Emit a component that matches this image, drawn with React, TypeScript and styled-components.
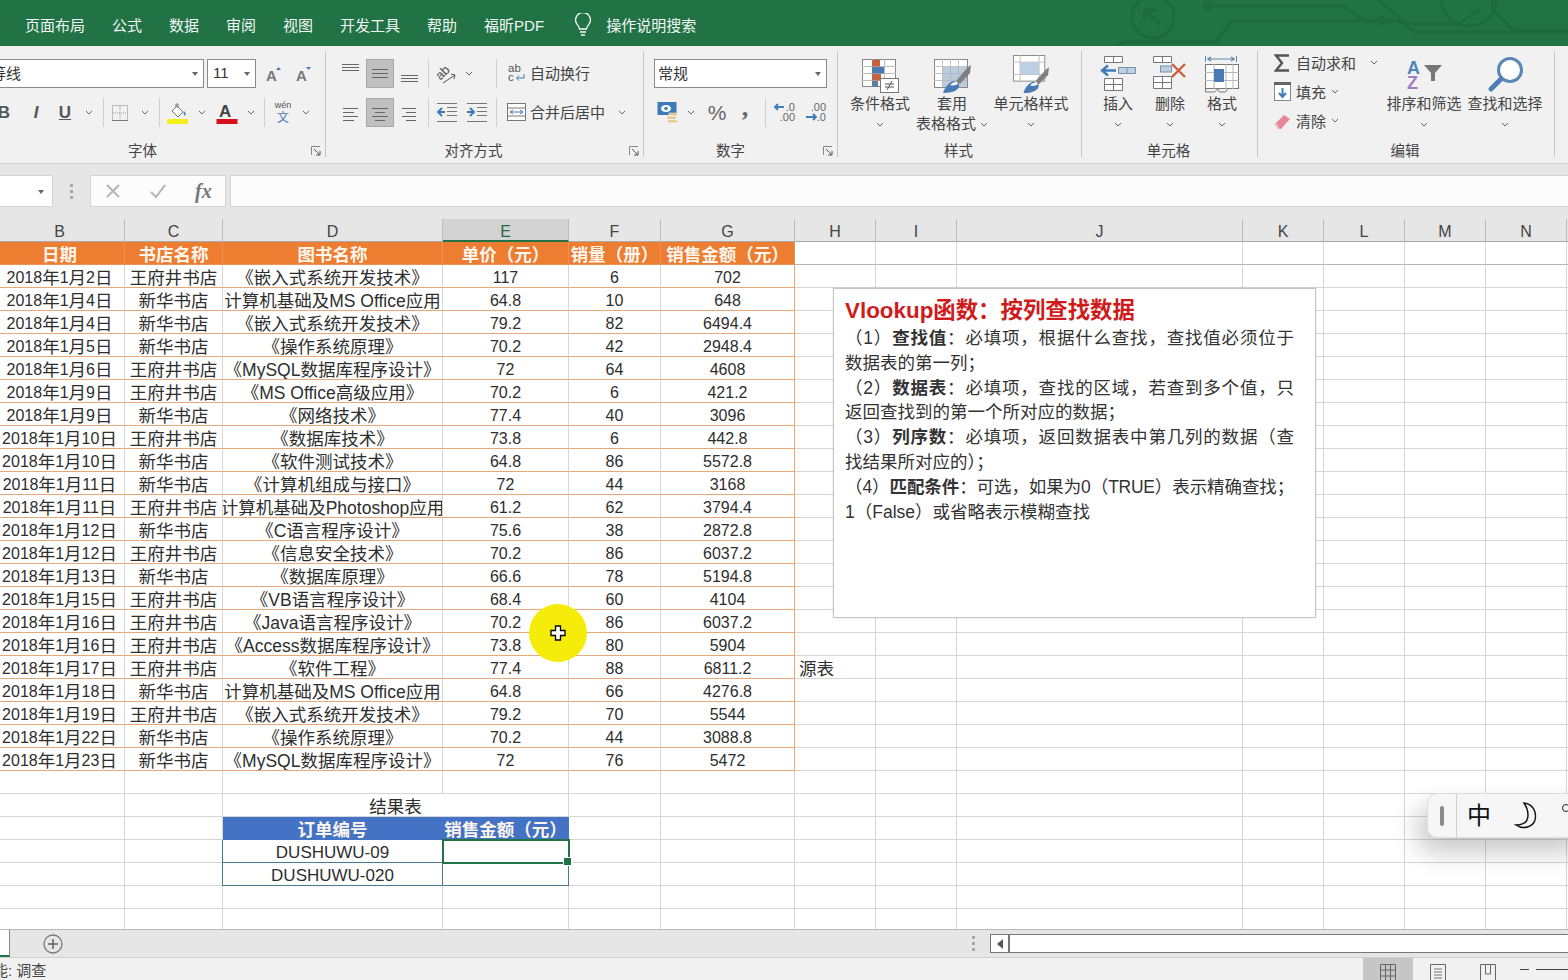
import React from 'react';
import styled, { createGlobalStyle } from 'styled-components';

const sans = '"Liberation Sans", "Noto Sans CJK SC", sans-serif';
const columns = ['B', 'C', 'D', 'E', 'F', 'G', 'H', 'I', 'J', 'K', 'L', 'M', 'N'];
const track = '125px 98px 220px 126px 92px 134px 81px 81px 286px 81px 81px 81px 81px 81px';

const tabs = ['页面布局', '公式', '数据', '审阅', '视图', '开发工具', '帮助', '福昕PDF'];

const sales = [
  ['2018年1月2日', '王府井书店', '《嵌入式系统开发技术》', '117', '6', '702'],
  ['2018年1月4日', '新华书店', '计算机基础及MS Office应用', '64.8', '10', '648'],
  ['2018年1月4日', '新华书店', '《嵌入式系统开发技术》', '79.2', '82', '6494.4'],
  ['2018年1月5日', '新华书店', '《操作系统原理》', '70.2', '42', '2948.4'],
  ['2018年1月6日', '王府井书店', '《MySQL数据库程序设计》', '72', '64', '4608'],
  ['2018年1月9日', '王府井书店', '《MS Office高级应用》', '70.2', '6', '421.2'],
  ['2018年1月9日', '新华书店', '《网络技术》', '77.4', '40', '3096'],
  ['2018年1月10日', '王府井书店', '《数据库技术》', '73.8', '6', '442.8'],
  ['2018年1月10日', '新华书店', '《软件测试技术》', '64.8', '86', '5572.8'],
  ['2018年1月11日', '新华书店', '《计算机组成与接口》', '72', '44', '3168'],
  ['2018年1月11日', '王府井书店', '计算机基础及Photoshop应用', '61.2', '62', '3794.4'],
  ['2018年1月12日', '新华书店', '《C语言程序设计》', '75.6', '38', '2872.8'],
  ['2018年1月12日', '王府井书店', '《信息安全技术》', '70.2', '86', '6037.2'],
  ['2018年1月13日', '新华书店', '《数据库原理》', '66.6', '78', '5194.8'],
  ['2018年1月15日', '王府井书店', '《VB语言程序设计》', '68.4', '60', '4104'],
  ['2018年1月16日', '王府井书店', '《Java语言程序设计》', '70.2', '86', '6037.2'],
  ['2018年1月16日', '王府井书店', '《Access数据库程序设计》', '73.8', '80', '5904'],
  ['2018年1月17日', '王府井书店', '《软件工程》', '77.4', '88', '6811.2'],
  ['2018年1月18日', '新华书店', '计算机基础及MS Office应用', '64.8', '66', '4276.8'],
  ['2018年1月19日', '王府井书店', '《嵌入式系统开发技术》', '79.2', '70', '5544'],
  ['2018年1月22日', '新华书店', '《操作系统原理》', '70.2', '44', '3088.8'],
  ['2018年1月23日', '新华书店', '《MySQL数据库程序设计》', '72', '76', '5472']
];

const GlobalStyle = createGlobalStyle`
  html, body { margin: 0; padding: 0; background: #fff; }
  * { box-sizing: border-box; }
`;

const Page = styled.div`
  position: relative;
  width: 1568px;
  height: 980px;
  overflow: hidden;
  display: flex;
  flex-direction: column;
  font-family: ${sans};
  color: #3c3c3c;
`;

const TabBar = styled.div`
  position: relative;
  flex: 0 0 46px;
  background: #217346;
  display: flex;
  align-items: center;
  gap: 27px;
  padding: 3px 0 0 25px;
  color: #f2f7f4;
  font-size: 15px;
`;

const SearchHint = styled.div`
  display: flex;
  align-items: center;
  gap: 14px;
  margin-left: 3px;
`;

const Circuit = styled.svg`
  position: absolute;
  right: 0;
  top: 0;
`;

const Ribbon = styled.div`
  flex: 0 0 117px;
  background: #f1f1f1;
  display: flex;
  padding-top: 5px;
  font-size: 15px;
  color: #444;
  overflow: hidden;
`;

const Group = styled.div<{ $w: number }>`
  position: relative;
  flex: 0 0 ${(p) => p.$w}px;
  height: 106px;
  border-right: 1px solid #c8c8c8;
  display: flex;
  flex-direction: column;
  justify-content: space-between;
`;

const GroupBody = styled.div`
  display: flex;
`;

const Rows = styled.div<{ $pl?: number }>`
  display: flex;
  flex-direction: column;
  gap: 10px;
  padding: 8px 0 0 ${(p) => p.$pl || 0}px;
`;

const ToolRow = styled.div`
  display: flex;
  align-items: center;
  height: 29px;
`;

const GroupLabel = styled.div<{ $shift?: number }>`
  height: 14px;
  line-height: 14px;
  text-align: center;
  font-size: 14.5px;
  transform: translate(${(p) => p.$shift || 0}px, 1px);
`;

const Launcher = styled.svg`
  position: absolute;
  right: 4px;
  bottom: 1px;
`;

const Field = styled.div<{ $w: number; $ml?: number; $pl?: number }>`
  flex: 0 0 ${(p) => p.$w}px;
  margin-left: ${(p) => p.$ml || 0}px;
  height: 29px;
  background: #fff;
  border: 1px solid #8a8a8a;
  padding: 0 5px 2px ${(p) => p.$pl || 4}px;
  display: flex;
  align-items: center;
  justify-content: space-between;
  font-size: 15px;
  color: #333;
`;

const Caret = styled.span`
  width: 0;
  height: 0;
  margin-top: 2px;
  border: 3px solid transparent;
  border-top: 4px solid #666;
  border-bottom: 0;
`;

const Tool = styled.div<{ $w: number; $ml?: number; $on?: boolean }>`
  flex: 0 0 ${(p) => p.$w}px;
  margin-left: ${(p) => p.$ml || 0}px;
  height: 29px;
  display: flex;
  align-items: center;
  justify-content: center;
  background: ${(p) => (p.$on ? '#c0c0c0' : 'transparent')};
  border: ${(p) => (p.$on ? '1px solid #a8a8a8' : '0')};
`;

const Letter = styled.span<{ $italic?: boolean; $under?: boolean }>`
  font-family: "Liberation Sans", sans-serif;
  font-weight: 700;
  font-size: 17px;
  font-style: ${(p) => (p.$italic ? 'italic' : 'normal')};
  text-decoration: ${(p) => (p.$under ? 'underline' : 'none')};
  color: #555;
`;

const Glyph = styled.span<{ $bold?: boolean }>`
  font-family: ${(p) => (p.$bold ? '"Liberation Serif", serif' : '"Liberation Sans", sans-serif')};
  font-weight: ${(p) => (p.$bold ? 700 : 400)};
  font-size: ${(p) => (p.$bold ? 26 : 21)}px;
  line-height: 1;
  margin-top: ${(p) => (p.$bold ? -10 : 0)}px;
  color: #666;
`;

const Divider = styled.div<{ $ml?: number }>`
  flex: 0 0 1px;
  height: 29px;
  margin-left: ${(p) => p.$ml || 0}px;
  background: #d0d0d0;
`;

const TextTool = styled.div<{ $ml?: number }>`
  display: flex;
  align-items: center;
  gap: 3px;
  padding-bottom: 2px;
  margin-left: ${(p) => p.$ml || 0}px;
  white-space: nowrap;
`;

const BigTool = styled.div<{ $w: number; $ml?: number }>`
  flex: 0 0 ${(p) => p.$w}px;
  min-width: 0;
  margin-left: ${(p) => p.$ml || 0}px;
  padding-top: 4px;
  display: flex;
  flex-direction: column;
  align-items: center;
  white-space: nowrap;
  line-height: 20px;
`;

const BigIcon = styled.div`
  height: 39px;
  display: flex;
  align-items: flex-end;
`;

const BigLine = styled.div`
  height: 20px;
  display: flex;
  align-items: center;
  gap: 4px;
`;

const EditList = styled.div`
  flex: 0 0 110px;
  margin: -3px 0 0 16px;
  display: flex;
  flex-direction: column;
`;

const EditItem = styled.div`
  height: 29px;
  display: flex;
  align-items: center;
  white-space: nowrap;
`;

const EditIcon = styled.div`
  flex: 0 0 22px;
  display: flex;
  justify-content: flex-start;
`;

const FormulaZone = styled.div`
  flex: 0 0 56px;
  background: #e6e6e6;
  border-top: 1px solid #d0d0d0;
  padding-top: 11px;
  display: flex;
  align-items: flex-start;
`;

const NameBox = styled.div`
  flex: 0 0 53px;
  height: 32px;
  background: #fff;
  border: 1px solid #d4d4d4;
  border-left: 0;
  display: flex;
  align-items: center;
  justify-content: flex-end;
  padding-right: 8px;
`;

const Grip = styled.div`
  flex: 0 0 37px;
  height: 32px;
  display: flex;
  flex-direction: column;
  align-items: center;
  justify-content: center;
  gap: 3px;

  span {
    width: 3px;
    height: 3px;
    background: #a8a8a8;
  }
`;

const FxBox = styled.div`
  flex: 0 0 136px;
  height: 32px;
  background: #fcfcfc;
  border: 1px solid #d4d4d4;
  display: flex;
  align-items: center;
  gap: 28px;
  padding-left: 14px;
`;

const FxText = styled.span`
  font-family: "Liberation Serif", serif;
  font-style: italic;
  font-weight: 700;
  font-size: 20px;
  color: #777;
`;

const FormulaInput = styled.div`
  flex: 1;
  margin-left: 4px;
  height: 32px;
  background: #fcfcfc;
  border: 1px solid #d4d4d4;
  border-right: 0;
`;

const ColumnHead = styled.div`
  flex: 0 0 23px;
  display: grid;
  grid-template-columns: ${track};
  background: #e6e6e6;
`;

const ColumnName = styled.div<{ $on?: boolean; $shift?: number }>`
  height: 23px;
  padding-right: ${(p) => p.$shift || 0}px;
  font-size: 16px;
  line-height: 25px;
  text-align: center;
  color: ${(p) => (p.$on ? '#1f6b41' : '#444')};
  background: ${(p) => (p.$on ? '#d2d2d2' : 'transparent')};
  border-right: 1px solid #bcbcbc;
  border-bottom: ${(p) => (p.$on ? '2px solid #217346' : '1px solid #a8a8a8')};
`;

const Sheet = styled.div`
  position: relative;
  flex: 0 0 687px;
  overflow: hidden;
  background: #fff;
`;

const Row = styled.div`
  display: grid;
  grid-template-columns: ${track};
  grid-auto-rows: 23px;
`;

type CellKind = 'plain' | 'title' | 'data' | 'edge' | 'result' | 'resultHead' | 'top';

const lineColor: Record<CellKind, string> = {
  plain: '#d6d6d6',
  title: '#e9935a',
  data: '#e9a877',
  edge: '#e9a877',
  result: '#4a7a8c',
  resultHead: '#4472c4',
  top: '#b4b4b4'
};

const sideColor = (kind: CellKind = 'plain') =>
  kind === 'edge' || kind === 'title' || kind === 'result' || kind === 'resultHead' ? lineColor[kind] : '#d6d6d6';

const Cell = styled.div<{ $kind?: CellKind; $span?: number; $shift?: number; $left?: boolean; $picked?: boolean }>`
  position: relative;
  grid-column: span ${(p) => p.$span || 1};
  display: flex;
  align-items: center;
  justify-content: ${(p) => (p.$left ? 'flex-start' : 'center')};
  padding: 3px ${(p) => p.$shift || 0}px 0 ${(p) => (p.$left ? 4 : 0)}px;
  overflow: ${(p) => (p.$picked ? 'visible' : 'hidden')};
  white-space: nowrap;
  font-size: 17.5px;
  line-height: 20px;
  color: ${(p) => (p.$kind === 'title' || p.$kind === 'resultHead' ? '#fdf6ef' : '#2e2e2e')};
  font-weight: ${(p) => (p.$kind === 'title' || p.$kind === 'resultHead' ? 700 : 400)};
  background: ${(p) =>
    p.$kind === 'title' ? '#ed7d31' : p.$kind === 'resultHead' ? '#4472c4' : 'transparent'};
  border-bottom: 1px solid ${(p) => lineColor[p.$kind || 'plain']};
  border-right: 1px solid ${(p) => sideColor(p.$kind)};

  ${(p) =>
    p.$picked &&
    `
    z-index: 2;
    outline: 2px solid #217346;
    outline-offset: -1px;

    &::after {
      content: '';
      position: absolute;
      right: -4px;
      bottom: -4px;
      width: 7px;
      height: 7px;
      background: #217346;
      border: 1px solid #fff;
    }
  `}
`;

const Digits = styled.span`
  font-size: 16px;
`;

const OrderCode = styled.span`
  font-size: 17px;
`;

const ResultFirst = styled(Cell)`
  border-left: 1px solid #4a7a8c;
  margin-left: -1px;
`;

const NoteBox = styled.div`
  position: absolute;
  left: 833px;
  top: 46px;
  width: 483px;
  height: 330px;
  padding: 7px 21px 0 11px;
  background: #fff;
  border: 1px solid #c4c4c4;
  box-shadow: 0 0 2px rgba(0, 0, 0, 0.12);
`;

const NoteTitle = styled.div`
  font-size: 22.4px;
  line-height: 30px;
  font-weight: 700;
  color: #cf1b1b;
`;

const NoteLine = styled.div<{ $fill?: boolean; $tight?: boolean }>`
  height: 24.8px;
  line-height: 24.8px;
  font-size: 17.5px;
  color: #333;
  white-space: nowrap;
  letter-spacing: ${(p) => (p.$tight ? '-0.3px' : '0')};
  text-align: justify;
  text-align-last: ${(p) => (p.$fill ? 'justify' : 'left')};
`;

const Pointer = styled.div`
  position: absolute;
  left: 529px;
  top: 362px;
  width: 58px;
  height: 58px;
  border-radius: 50%;
  background: #f6ec09;
  display: flex;
  align-items: center;
  justify-content: center;
`;

const ImeBar = styled.div`
  position: absolute;
  left: 1427px;
  top: 793px;
  width: 160px;
  height: 45px;
  display: flex;
  align-items: center;
  background: #f6f6f6;
  border: 1px solid #dcdcdc;
  border-radius: 10px 0 0 10px;
  box-shadow: -8px 14px 26px rgba(0, 0, 0, 0.22);
`;

const ImeHandle = styled.div`
  flex: 0 0 29px;
  height: 100%;
  border-right: 1px solid #d0d0d0;
  display: flex;
  align-items: center;
  justify-content: center;

  span {
    width: 4px;
    height: 20px;
    border-radius: 2px;
    background: #8a8a8a;
  }
`;

const ImeText = styled.span`
  margin: 0 23px 0 10px;
  font-size: 24px;
  line-height: 1;
  color: #111;
`;

const ImeDot = styled.span`
  margin-left: 22px;
  margin-top: -16px;
  width: 8px;
  height: 8px;
  flex: 0 0 8px;
  border: 1.5px solid #222;
  border-radius: 50%;
`;

const TabStrip = styled.div`
  flex: 0 0 29px;
  background: #e6e6e6;
  border-top: 1px solid #b8b8b8;
  border-bottom: 1px solid #d0d0d0;
  display: flex;
  align-items: center;
`;

const ActiveTab = styled.div`
  flex: 0 0 10px;
  height: 100%;
  margin-top: -1px;
  background: #fff;
  border-right: 1px solid #8a8a8a;
  border-bottom: 2px solid #217346;
`;

const AddSheet = styled.svg`
  margin-left: 33px;
`;

const ScrollGrip = styled(Grip)`
  flex: 0 0 8px;
  height: 18px;
  margin-left: 906px;
`;

const ScrollTrack = styled.div`
  flex: 1;
  height: 19px;
  margin-left: 13px;
  margin-right: -2px;
  background: #fff;
  border: 1px solid #777;
  display: flex;
`;

const ScrollArrow = styled.div`
  flex: 0 0 19px;
  border-right: 2px solid #777;
  display: flex;
  align-items: center;
  justify-content: center;

  &::before {
    content: '';
    border: 5px solid transparent;
    border-left: 0;
    border-right: 6px solid #555;
  }
`;

const StatusBar = styled.div`
  flex: 1;
  background: #f1f1f1;
  display: flex;
  font-size: 15px;
  line-height: 26px;
  color: #444;
`;

const StatusText = styled.div`
  flex: 0 0 1385px;
  margin-left: -22px;
`;

const ViewButton = styled.div<{ $on?: boolean }>`
  flex: 0 0 50px;
  background: ${(p) => (p.$on ? '#c6c6c6' : 'transparent')};
  display: flex;
  justify-content: center;
  padding-top: 6px;
`;

const ZoomLine = styled.div`
  display: flex;
  align-items: center;
  gap: 7px;
  height: 22px;
  margin-left: 7px;
  flex: 1;

  span {
    height: 1px;
    background: #444;
  }
`;

const Mixed = ({ text }: { text: string }) => (
  <>
    {text.split(/([\d.-]+)/).map((part, i) =>
      /^[\d.-]+$/.test(part) ? <Digits key={i}>{part}</Digits> : <span key={i}>{part}</span>
    )}
  </>
);

const Chevron = () => (
  <svg width="8" height="5" viewBox="0 0 8 5">
    <path d="M1 1l3 3 3-3" fill="none" stroke="#666" strokeWidth="1" />
  </svg>
);

const Lines = ({ rows }: { rows: number[][] }) => (
  <svg width="22" height="22" viewBox="0 0 22 22">
    {rows.map(([x1, x2, y], i) => (
      <line key={i} x1={x1} x2={x2} y1={y + 0.5} y2={y + 0.5} stroke="#666" strokeWidth="1" />
    ))}
  </svg>
);

const GrowFont = ({ down }: { down?: boolean }) => (
  <svg width="20" height="20" viewBox="0 0 20 20">
    <text x="4" y="17" fontSize="15" fontWeight="700" fontFamily="Liberation Sans" fill="#777">A</text>
    <path d={down ? 'M14 3h5l-2.500 3z' : 'M14 6h5l-2.500-3z'} fill="#4a7ab5" />
  </svg>
);

const BorderIcon = () => (
  <svg width="18" height="18" viewBox="0 0 18 18">
    <rect x="1.5" y="1.5" width="15" height="15" fill="none" stroke="#888" strokeDasharray="1 1" />
    <path d="M9 2v14M2 9h14" stroke="#999" strokeDasharray="1 1" />
    <path d="M1 16.500h16" stroke="#777" />
  </svg>
);

const FillIcon = () => (
  <svg width="22" height="22" viewBox="0 0 22 22">
    <path d="M5 9l5-5 6 6-5 5z" fill="#fff" stroke="#777" />
    <path d="M9 5V2h2v4" fill="none" stroke="#777" />
    <path d="M17 9c2 2 2 4 1 5-1-1-2-3-1-5z" fill="#4a7ab5" />
    <rect x="0" y="17" width="21" height="5" fill="#f5ee1c" />
  </svg>
);

const ColorA = () => (
  <svg width="22" height="24" viewBox="0 0 22 24">
    <text x="3" y="16" fontSize="17" fontWeight="700" fontFamily="Liberation Sans" fill="#444">A</text>
    <rect x="0.5" y="18" width="21" height="5" fill="#d8101a" />
  </svg>
);

const PhoneticIcon = () => (
  <svg width="24" height="28" viewBox="0 0 24 28">
    <text x="12" y="9" textAnchor="middle" fontSize="9" fontFamily="Liberation Sans" fill="#555">wén</text>
    <text x="12" y="23" textAnchor="middle" fontSize="12" fontFamily="Noto Sans CJK SC" fill="#4a7ab5">文</text>
  </svg>
);

const OrientIcon = () => (
  <svg width="22" height="22" viewBox="0 0 22 22">
    <text x="0" y="13" fontSize="13" fontFamily="Liberation Sans" fill="#555" transform="rotate(-45 8 10)">ab</text>
    <path d="M7 20l12-8M15 11l4 1-1 4" fill="none" stroke="#555" />
  </svg>
);

const IndentIcon = ({ out }: { out?: boolean }) => (
  <svg width="22" height="20" viewBox="0 0 22 20">
    <path d="M11 4.500h10M11 8.500h10M11 12.500h10M1 18.500h20M1 .5h20" stroke="#777" />
    {out ? (
      <path d="M9 9H3m3-4L2 9l4 4" fill="none" stroke="#3e7cb8" strokeWidth="2" />
    ) : (
      <path d="M1 9h6M4 5l4 4-4 4" fill="none" stroke="#3e7cb8" strokeWidth="2" />
    )}
  </svg>
);

const WrapIcon = () => (
  <svg width="20" height="20" viewBox="0 0 20 20">
    <text x="1" y="9" fontSize="11.500" fontFamily="Liberation Sans" fill="#555">ab</text>
    <text x="1" y="18" fontSize="11.500" fontFamily="Liberation Sans" fill="#555">c</text>
    <path d="M17 11v4h-7m2-2.500L9.500 15l2.500 2.500" fill="none" stroke="#3e7cb8" />
  </svg>
);

const MergeIcon = () => (
  <svg width="20" height="20" viewBox="0 0 20 20">
    <rect x="0.5" y="1.5" width="18" height="17" fill="#fff" stroke="#777" />
    <path d="M1 6h18M1 14h18" stroke="#777" />
    <path d="M3 10h13M6 8l-3 2 3 2M13 8l3 2-3 2" fill="none" stroke="#3e7cb8" />
  </svg>
);

const MoneyIcon = () => (
  <svg width="22" height="24" viewBox="0 0 22 24">
    <rect x="0.5" y="1" width="19" height="13" fill="#3e7cb8" />
    <ellipse cx="9" cy="7.500" rx="5" ry="3.500" fill="#fff" />
    <circle cx="9" cy="7.500" r="1.800" fill="#3e7cb8" />
    <path d="M12 12h8v2.500h-8zM10 15.500h9V18h-9zM11 19h9v2.500h-9z" fill="#e8c27a" stroke="#f1f1f1" strokeWidth=".5" />
  </svg>
);

const DecimalIcon = ({ more }: { more?: boolean }) => (
  <svg width="26" height="22" viewBox="0 0 26 22">
    <text x="25" y="9" textAnchor="end" fontSize="11" fontFamily="Liberation Sans" fill="#666">{more ? '.0' : '.00'}</text>
    <text x="25" y="19" textAnchor="end" fontSize="11" fontFamily="Liberation Sans" fill="#666">{more ? '.00' : '.0'}</text>
    <path
      d={more ? 'M14 5H5m3-3L5 5l3 3' : 'M5 15h10m-3-3l3 3-3 3'}
      fill="none"
      stroke="#3e7cb8"
      strokeWidth="1.800"
    />
  </svg>
);

const CondFormatIcon = () => (
  <svg width="38" height="38" viewBox="0 0 38 38">
    <rect x="1.5" y="3.5" width="33" height="27" fill="#fff" stroke="#888" />
    <path d="M1 10.500h34M1 17.500h34M1 24.500h34M11.500 3v28M23.500 3v28" stroke="#bdbdbd" />
    <rect x="11" y="4" width="8" height="6.500" fill="#c8603f" />
    <rect x="11" y="11" width="12" height="6.500" fill="#4a7ab5" />
    <rect x="11" y="18" width="9" height="6.500" fill="#c8603f" />
    <rect x="11" y="25" width="6" height="6" fill="#5a7f9f" />
    <rect x="19.500" y="22.500" width="18" height="14" fill="#fff" stroke="#777" />
    <path d="M24 28h9M24 31h9M31 25l-5 9" fill="none" stroke="#555" />
  </svg>
);

const TableFormatIcon = () => (
  <svg width="40" height="38" viewBox="0 0 40 38">
    <rect x="2.500" y="3.500" width="33" height="28" fill="#fff" stroke="#888" />
    <path d="M2 10.500h33M2 17.500h33M2 24.500h33M10.500 3v28M18.500 3v28M26.500 3v28" stroke="#c4c4c4" />
    <rect x="11" y="11" width="24" height="20" fill="#bccbd9" />
    <path d="M11 17.500h24M11 24.500h24M18.500 11v20M26.500 11v20" stroke="#a9bccd" />
    <path d="M24 25l12-14 3-2-1 8-10 11z" fill="#808080" />
    <path d="M11 37c2-6 6-11 11-12l5 3c1 5-4 9-16 9z" fill="#4a7ab5" />
    <path d="M18 29c2-2 4-3 6-3l2 2c-2 1-5 2-8 1z" fill="#fff" />
  </svg>
);

const CellStyleIcon = () => (
  <svg width="38" height="40" viewBox="0 0 40 42">
    <rect x="1.500" y="1.500" width="33" height="27" fill="#fff" stroke="#888" />
    <path d="M1 8.500h34M1 21.500h34M8.500 1v28M28.500 1v28" stroke="#bdbdbd" />
    <rect x="8.500" y="8.500" width="20" height="13" fill="#bccfe3" />
    <path d="M25 28l11-12 3-2-1 8-10 10z" fill="#808080" />
    <path d="M12 41c2-6 6-11 11-12l5 3c1 5-4 9-16 9z" fill="#4a7ab5" />
    <path d="M19 33c2-2 4-3 6-3l2 2c-2 1-5 2-8 1z" fill="#fff" />
  </svg>
);

const InsertIcon = () => (
  <svg width="38" height="39" viewBox="0 0 38 39">
    <path d="M5.500 1.500h18v6h-18zM14.500 1v7M5.500 23.500h18v12h-18zM5 29.500h19M14.500 23v13" fill="#fff" stroke="#777" />
    <path d="M19.500 12.500h17v6h-17zM28 12v7" fill="#bcd0e4" stroke="#7b8fa3" />
    <path d="M17 15.500H4m5-5l-6 5 6 5" fill="none" stroke="#3e7cb8" strokeWidth="2.400" />
  </svg>
);

const DeleteIcon = () => (
  <svg width="36" height="39" viewBox="0 0 36 39">
    <path d="M1.500 1.500h18v6h-18zM10.500 1v7M1.500 21.500h18v12h-18zM1 27.500h19M10.500 21v13" fill="#fff" stroke="#777" />
    <rect x="8.500" y="11" width="11" height="6" fill="#bcd0e4" stroke="#7b8fa3" />
    <path d="M20 9l13 13M33 9L20 22" stroke="#c8603f" strokeWidth="2.400" />
  </svg>
);

const FormatIcon = () => (
  <svg width="36" height="39" viewBox="0 0 36 39">
    <path d="M4 4h26M1.500 1v6M32.500 1v6" stroke="#5f86ad" />
    <path d="M7 2L4 4l3 2M27 2l3 2-3 2" fill="none" stroke="#5f86ad" strokeWidth="1.500" />
    <rect x="1.500" y="9.500" width="33" height="24" fill="#fff" stroke="#777" />
    <path d="M1 17.500h34M1 25.500h34M10 9v25M22 9v25M29 9v25" stroke="#b8b8b8" />
    <rect x="10" y="14" width="10" height="13" fill="#4a7ab5" />
    <path d="M1.500 34v3h9l3-3M13.500 34l2 3h6l2-3" fill="none" stroke="#777" />
  </svg>
);

const SigmaIcon = () => (
  <svg width="16" height="18" viewBox="0 0 16 18">
    <path d="M15 1.500H2l6 7.500-6 7.500h13" fill="none" stroke="#555" strokeWidth="2.400" />
  </svg>
);

const DownFillIcon = () => (
  <svg width="18" height="19" viewBox="0 0 18 19">
    <rect x="0.5" y="0.5" width="16" height="18" fill="#fff" stroke="#888" />
    <rect x="0" y="0" width="17" height="3" fill="#666" />
    <path d="M8.500 6v9M5 11l3.500 4 3.500-4" fill="none" stroke="#3e7cb8" strokeWidth="2" />
  </svg>
);

const EraserIcon = () => (
  <svg width="18" height="18" viewBox="0 0 18 18">
    <path d="M1 12l9-9 6 4-9 10H4z" fill="#e58798" />
    <path d="M1 12l3 5h2l-3-6z" fill="#efb5be" />
  </svg>
);

const SortIcon = () => (
  <svg width="38" height="36" viewBox="0 0 38 36">
    <text x="2" y="16" fontSize="18" fontWeight="700" fontFamily="Liberation Sans" fill="#4f86ba">A</text>
    <text x="2" y="31" fontSize="18" fontWeight="700" fontFamily="Liberation Sans" fill="#a37cc0">Z</text>
    <path d="M19 7h18l-7 8v8h-4v-8z" fill="#777" />
  </svg>
);

const FindIcon = () => (
  <svg width="38" height="38" viewBox="0 0 38 38">
    <circle cx="24" cy="14" r="11.500" fill="#fff" stroke="#5b87b5" strokeWidth="3" />
    <path d="M15 23L5 33" stroke="#4f7fb3" strokeWidth="5" strokeLinecap="round" />
  </svg>
);

const DialogMark = () => (
  <Launcher width="10" height="10" viewBox="0 0 10 10">
    <path d="M.5 9V.5H9" fill="none" stroke="#888" />
    <path d="M3 3l6 6M9 5v4H5" fill="none" stroke="#555" />
  </Launcher>
);

const Bulb = () => (
  <svg width="18" height="24" viewBox="0 0 18 24">
    <path d="M5.500 16c0-3-4-4.500-4-9a7.500 7.500 0 0 1 15 0c0 4.500-4 6-4 9z" fill="none" stroke="#f2f7f4" strokeWidth="1.300" />
    <path d="M6 19h6M7 22h4" stroke="#f2f7f4" strokeWidth="1.300" />
  </svg>
);

const Moon = () => (
  <svg width="26" height="30" viewBox="0 0 26 30">
    <path d="M10 2c9 1 13 9 11 17-2 7-12 10-19 5 8 0 12-4 12-10 0-5-2-9-4-12z" fill="none" stroke="#111" strokeWidth="1.400" />
  </svg>
);

const GridView = () => (
  <svg width="16" height="18" viewBox="0 0 16 18">
    <path d="M.5.5h15v17H.5zM5.500 0v18M10.500 0v18M0 6h16M0 12h16" fill="none" stroke="#666" />
  </svg>
);

const PageView = () => (
  <svg width="16" height="18" viewBox="0 0 16 18">
    <path d="M.5.5h15v17H.5z" fill="none" stroke="#666" />
    <path d="M4 5h8M4 8h8M4 11h8M4 14h8" stroke="#777" />
  </svg>
);

const BreakView = () => (
  <svg width="16" height="18" viewBox="0 0 16 18">
    <path d="M.5.5h15v17H.5zM5.500 0v10h5V0" fill="none" stroke="#666" />
  </svg>
);

const CrossCursor = () => (
  <svg width="16" height="16" viewBox="0 0 16 16">
    <path d="M5.500 1h5v4.500H15v5h-4.500V15h-5v-4.500H1v-5h4.500z" fill="#fff" stroke="#000" strokeWidth="1.300" />
  </svg>
);

const CircuitLines = () => (
  <Circuit width="480" height="46" viewBox="0 0 480 46" fill="none" stroke="#1c6a3e" strokeWidth="3">
    <circle cx="65" cy="17" r="21" />
    <path d="M57 10h11M57 10v10M57 10l15 15" strokeWidth="3.500" />
    <circle cx="120" cy="6" r="3" />
    <path d="M123 6h132l22 15h14" />
    <circle cx="294" cy="21" r="3" />
    <path d="M30 46l6-4h92l16-21h146" />
    <path d="M297 21h14l16 11h153" />
    <circle cx="381" cy="-2" r="28" />
    <path d="M290 0l30 24h50l22-14" />
    <path d="M405 0v10l20 20h55" />
  </Circuit>
);

const Ticks = () => (
  <Grip>
    <span />
    <span />
    <span />
  </Grip>
);

const FontGroup = () => (
  <Group $w={326}>
    <Rows>
      <ToolRow>
        <Field $w={224} $ml={-20} $pl={10}>
          等线
          <Caret />
        </Field>
        <Field $w={49} $ml={3} $pl={5}>
          11
          <Caret />
        </Field>
        <Tool $w={30} $ml={1}><GrowFont /></Tool>
        <Tool $w={30}><GrowFont down /></Tool>
      </ToolRow>
      <ToolRow>
        <Tool $w={28} $ml={-10}><Letter>B</Letter></Tool>
        <Tool $w={36}><Letter $italic>I</Letter></Tool>
        <Tool $w={22}><Letter $under>U</Letter></Tool>
        <Tool $w={26}><Chevron /></Tool>
        <Divider $ml={1} />
        <Tool $w={32}><BorderIcon /></Tool>
        <Tool $w={18}><Chevron /></Tool>
        <Divider $ml={5} />
        <Tool $w={36}><FillIcon /></Tool>
        <Tool $w={12}><Chevron /></Tool>
        <Tool $w={38}><ColorA /></Tool>
        <Tool $w={10}><Chevron /></Tool>
        <Divider $ml={8} />
        <Tool $w={36}><PhoneticIcon /></Tool>
        <Tool $w={10}><Chevron /></Tool>
      </ToolRow>
    </Rows>
    <GroupLabel $shift={-20}>字体</GroupLabel>
    <DialogMark />
  </Group>
);

const AlignGroup = () => (
  <Group $w={318}>
    <Rows $pl={12}>
      <ToolRow>
        <Tool $w={24}><Lines rows={[[3, 20, 1], [3, 20, 4], [3, 20, 7]]} /></Tool>
        <Tool $w={28} $ml={4} $on><Lines rows={[[3, 19, 6], [3, 19, 10], [3, 19, 14]]} /></Tool>
        <Tool $w={30}><Lines rows={[[3, 20, 12], [3, 20, 15], [3, 20, 18]]} /></Tool>
        <Divider $ml={4} />
        <Tool $w={36}><OrientIcon /></Tool>
        <Tool $w={8}><Chevron /></Tool>
        <Divider $ml={23} />
        <TextTool $ml={10}><WrapIcon />自动换行</TextTool>
      </ToolRow>
      <ToolRow>
        <Tool $w={24}><Lines rows={[[4, 19, 6], [4, 15, 10], [4, 19, 14], [4, 15, 18]]} /></Tool>
        <Tool $w={28} $ml={4} $on><Lines rows={[[3, 19, 6], [6, 16, 10], [3, 19, 14], [6, 16, 18]]} /></Tool>
        <Tool $w={30}><Lines rows={[[4, 18, 6], [8, 18, 10], [4, 18, 14], [8, 18, 18]]} /></Tool>
        <Divider $ml={4} />
        <Tool $w={30} $ml={3}><IndentIcon out /></Tool>
        <Tool $w={30}><IndentIcon /></Tool>
        <Divider $ml={4} />
        <TextTool $ml={10}><MergeIcon />合并后居中</TextTool>
        <Tool $w={14} $ml={10}><Chevron /></Tool>
      </ToolRow>
    </Rows>
    <GroupLabel $shift={-11}>对齐方式</GroupLabel>
    <DialogMark />
  </Group>
);

const NumberGroup = () => (
  <Group $w={194}>
    <Rows $pl={10}>
      <ToolRow>
        <Field $w={173} $pl={3}>
          常规
          <Caret />
        </Field>
      </ToolRow>
      <ToolRow>
        <Tool $w={28}><MoneyIcon /></Tool>
        <Tool $w={18}><Chevron /></Tool>
        <Tool $w={30} $ml={2}><Glyph>%</Glyph></Tool>
        <Tool $w={26}><Glyph $bold>,</Glyph></Tool>
        <Divider $ml={7} />
        <Tool $w={34}><DecimalIcon more /></Tool>
        <Tool $w={28}><DecimalIcon /></Tool>
      </ToolRow>
    </Rows>
    <GroupLabel $shift={-10}>数字</GroupLabel>
    <DialogMark />
  </Group>
);

const StyleGroup = () => (
  <Group $w={244}>
    <GroupBody>
      <BigTool $w={76} $ml={4}>
        <BigIcon><CondFormatIcon /></BigIcon>
        <BigLine>条件格式</BigLine>
        <BigLine><Chevron /></BigLine>
      </BigTool>
      <BigTool $w={68}>
        <BigIcon><TableFormatIcon /></BigIcon>
        <BigLine>套用</BigLine>
        <BigLine>表格格式<Chevron /></BigLine>
      </BigTool>
      <BigTool $w={90}>
        <BigIcon><CellStyleIcon /></BigIcon>
        <BigLine>单元格样式</BigLine>
        <BigLine><Chevron /></BigLine>
      </BigTool>
    </GroupBody>
    <GroupLabel $shift={-1}>样式</GroupLabel>
  </Group>
);

const CellGroup = () => (
  <Group $w={176}>
    <GroupBody>
      <BigTool $w={52} $ml={10}>
        <BigIcon><InsertIcon /></BigIcon>
        <BigLine>插入</BigLine>
        <BigLine><Chevron /></BigLine>
      </BigTool>
      <BigTool $w={52}>
        <BigIcon><DeleteIcon /></BigIcon>
        <BigLine>删除</BigLine>
        <BigLine><Chevron /></BigLine>
      </BigTool>
      <BigTool $w={52}>
        <BigIcon><FormatIcon /></BigIcon>
        <BigLine>格式</BigLine>
        <BigLine><Chevron /></BigLine>
      </BigTool>
    </GroupBody>
    <GroupLabel $shift={-1}>单元格</GroupLabel>
  </Group>
);

const EditGroup = () => (
  <Group $w={297}>
    <GroupBody>
      <EditList>
        <EditItem>
          <EditIcon><SigmaIcon /></EditIcon>
          自动求和
          <Tool $w={10} $ml={13}><Chevron /></Tool>
        </EditItem>
        <EditItem>
          <EditIcon><DownFillIcon /></EditIcon>
          填充
          <Tool $w={10} $ml={4}><Chevron /></Tool>
        </EditItem>
        <EditItem>
          <EditIcon><EraserIcon /></EditIcon>
          清除
          <Tool $w={10} $ml={4}><Chevron /></Tool>
        </EditItem>
      </EditList>
      <BigTool $w={80}>
        <BigIcon><SortIcon /></BigIcon>
        <BigLine>排序和筛选</BigLine>
        <BigLine><Chevron /></BigLine>
      </BigTool>
      <BigTool $w={80} $ml={1}>
        <BigIcon><FindIcon /></BigIcon>
        <BigLine>查找和选择</BigLine>
        <BigLine><Chevron /></BigLine>
      </BigTool>
    </GroupBody>
    <GroupLabel $shift={-1}>编辑</GroupLabel>
  </Group>
);

const Blanks = ({ count, kind }: { count: number; kind?: CellKind }) => (
  <>
    {Array.from({ length: count }).map((_, i) => (
      <Cell key={i} $kind={kind} />
    ))}
  </>
);

const SalesRow = ({ row, note }: { row: string[]; note?: string }) => (
  <Row>
    <Cell $kind="data" $shift={5}><Mixed text={row[0]} /></Cell>
    <Cell $kind="data">{row[1]}</Cell>
    <Cell $kind="data"><Mixed text={row[2]} /></Cell>
    <Cell $kind="data"><Digits>{row[3]}</Digits></Cell>
    <Cell $kind="data"><Digits>{row[4]}</Digits></Cell>
    <Cell $kind="edge"><Digits>{row[5]}</Digits></Cell>
    {note ? <Cell $left>{note}</Cell> : <Cell />}
    <Blanks count={7} />
  </Row>
);

export default function App() {
  return (
    <Page>
      <GlobalStyle />
      <TabBar>
        {tabs.map((tab) => (
          <span key={tab}>{tab}</span>
        ))}
        <SearchHint>
          <Bulb />
          操作说明搜索
        </SearchHint>
        <CircuitLines />
      </TabBar>

      <Ribbon>
        <FontGroup />
        <AlignGroup />
        <NumberGroup />
        <StyleGroup />
        <CellGroup />
        <EditGroup />
      </Ribbon>

      <FormulaZone>
        <NameBox><Caret /></NameBox>
        <Ticks />
        <FxBox>
          <svg width="16" height="16" viewBox="0 0 16 16">
            <path d="M2 2l12 12M14 2L2 14" stroke="#b4b4b4" strokeWidth="2" />
          </svg>
          <svg width="18" height="16" viewBox="0 0 18 16">
            <path d="M2 9l5 5L16 2" fill="none" stroke="#b4b4b4" strokeWidth="2" />
          </svg>
          <FxText>fx</FxText>
        </FxBox>
        <FormulaInput />
      </FormulaZone>

      <ColumnHead>
        {columns.map((name, i) => (
          <ColumnName key={name} $on={name === 'E'} $shift={i === 0 ? 5 : 0}>
            {name}
          </ColumnName>
        ))}
        <ColumnName />
      </ColumnHead>

      <Sheet>
        <Row>
          <Cell $kind="title" $shift={5}>日期</Cell>
          <Cell $kind="title">书店名称</Cell>
          <Cell $kind="title">图书名称</Cell>
          <Cell $kind="title">单价（元）</Cell>
          <Cell $kind="title">销量（册）</Cell>
          <Cell $kind="title">销售金额（元）</Cell>
          <Blanks count={8} kind="top" />
        </Row>

        {sales.map((row, i) => (
          <SalesRow key={i} row={row} note={i === 17 ? '源表' : undefined} />
        ))}

        <Row>
          <Blanks count={14} />
        </Row>
        <Row>
          <Blanks count={2} />
          <Cell $span={2}>结果表</Cell>
          <Blanks count={10} />
        </Row>
        <Row>
          <Blanks count={2} />
          <Cell $kind="resultHead">订单编号</Cell>
          <Cell $kind="resultHead">销售金额（元）</Cell>
          <Blanks count={10} />
        </Row>
        <Row>
          <Blanks count={2} />
          <ResultFirst $kind="result"><OrderCode>DUSHUWU-09</OrderCode></ResultFirst>
          <Cell $kind="result" $picked />
          <Blanks count={10} />
        </Row>
        <Row>
          <Blanks count={2} />
          <ResultFirst $kind="result"><OrderCode>DUSHUWU-020</OrderCode></ResultFirst>
          <Cell $kind="result" />
          <Blanks count={10} />
        </Row>
        <Row>
          <Blanks count={14} />
        </Row>
        <Row>
          <Blanks count={14} />
        </Row>

        <NoteBox>
          <NoteTitle>Vlookup函数：按列查找数据</NoteTitle>
          <NoteLine $fill>（1）<b>查找值</b>：必填项，根据什么查找，查找值必须位于</NoteLine>
          <NoteLine>数据表的第一列；</NoteLine>
          <NoteLine $fill>（2）<b>数据表</b>：必填项，查找的区域，若查到多个值，只</NoteLine>
          <NoteLine>返回查找到的第一个所对应的数据；</NoteLine>
          <NoteLine $fill>（3）<b>列序数</b>：必填项，返回数据表中第几列的数据（查</NoteLine>
          <NoteLine>找结果所对应的）；</NoteLine>
          <NoteLine $fill $tight>（4）<b>匹配条件</b>：可选，如果为0（TRUE）表示精确查找；</NoteLine>
          <NoteLine>1（False）或省略表示模糊查找</NoteLine>
        </NoteBox>

        <Pointer>
          <CrossCursor />
        </Pointer>
      </Sheet>

      <TabStrip>
        <ActiveTab />
        <AddSheet width="20" height="20" viewBox="0 0 20 20">
          <circle cx="10" cy="10" r="9" fill="none" stroke="#777" strokeWidth="1.300" />
          <path d="M10 5v10M5 10h10" stroke="#666" strokeWidth="1.600" />
        </AddSheet>
        <ScrollGrip>
          <span />
          <span />
          <span />
        </ScrollGrip>
        <ScrollTrack>
          <ScrollArrow />
        </ScrollTrack>
      </TabStrip>

      <StatusBar>
        <StatusText>功能: 调查</StatusText>
        <ViewButton $on><GridView /></ViewButton>
        <ViewButton><PageView /></ViewButton>
        <ViewButton><BreakView /></ViewButton>
        <ZoomLine>
          <span style={{ width: 9 }} />
          <span style={{ width: 40 }} />
        </ZoomLine>
      </StatusBar>

      <ImeBar>
        <ImeHandle>
          <span />
        </ImeHandle>
        <ImeText>中</ImeText>
        <Moon />
        <ImeDot />
      </ImeBar>
    </Page>
  );
}
